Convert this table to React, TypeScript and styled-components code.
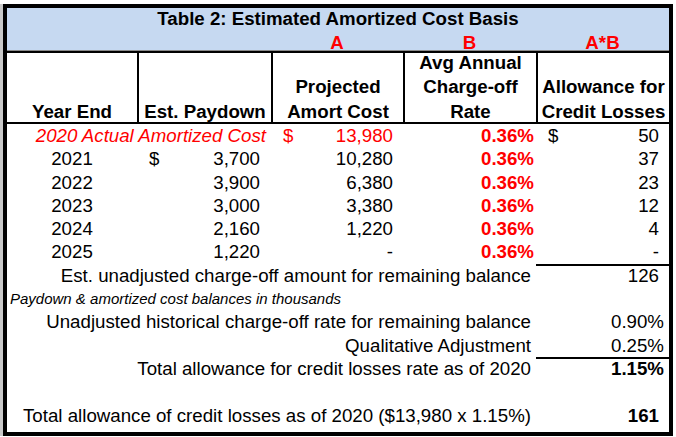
import styled, { createGlobalStyle } from 'styled-components';

const COLS = '130px 134px 132px 133px 133px';

const GlobalStyle = createGlobalStyle`
  html, body {
    margin: 0;
    padding: 0;
    background: #fff;
  }
  body {
    font-family: 'Liberation Sans', Arial, sans-serif;
    color: #000;
  }
`;

const Frame = styled.div`
  box-sizing: border-box;
  width: 670px;
  height: 432px;
  margin: 4px 0 0 3px;
  border: 4px solid #000;
  box-shadow: -3px 0 0 #c8c8c8;
  font-size: 18.7px;
  overflow: hidden;
`;

const TitleBand = styled.div`
  height: 42px;
  background: #c6d9f1;
  border-bottom: 1px solid #8a8a8a;
`;

const Title = styled.div`
  padding-top: 1px;
  line-height: 19px;
  text-align: center;
  font-weight: bold;
`;

const LetterRow = styled.div`
  display: grid;
  grid-template-columns: ${COLS};
  margin-top: 6px;
  line-height: 17px;
  color: #f00;
  font-weight: bold;
  text-align: center;
`;

const HeadRow = styled.div`
  display: grid;
  grid-template-columns: ${COLS};
  grid-template-rows: 69px;
  height: 69px;
  border-top: 2px solid #000;
  border-bottom: 2px solid #000;
  font-weight: bold;
`;

const HeadCell = styled.div`
  min-height: 0;
  display: flex;
  flex-direction: column;
  justify-content: flex-end;
  align-items: center;
  line-height: 24.5px;
  text-align: center;

  & + & {
    border-left: 2px solid #000;
  }
`;

const HeadText = styled.div`
  margin-bottom: -2px;
  white-space: nowrap;
`;

const Row = styled.div`
  display: grid;
  grid-template-columns: ${COLS};
  height: 23.3px;
  line-height: 23.3px;
`;

interface CellProps {
  $span?: number;
  $align?: 'left' | 'center' | 'right' | 'split';
  $pl?: number;
  $pr?: number;
  $red?: boolean;
  $bold?: boolean;
  $italic?: boolean;
  $small?: boolean;
  $rule?: boolean;
}

const justify = {
  left: 'flex-start',
  center: 'center',
  right: 'flex-end',
  split: 'space-between'
};

const Cell = styled.div<CellProps>`
  grid-column: span ${({ $span }) => $span ?? 1};
  display: flex;
  justify-content: ${({ $align }) => justify[$align ?? 'right']};
  padding-left: ${({ $pl }) => $pl ?? 0}px;
  padding-right: ${({ $pr }) => $pr ?? 0}px;
  color: ${({ $red }) => ($red ? '#f00' : '#000')};
  font-weight: ${({ $bold }) => ($bold ? 'bold' : 'normal')};
  font-style: ${({ $italic }) => ($italic ? 'italic' : 'normal')};
  font-size: ${({ $small }) => ($small ? '15px' : 'inherit')};
  box-shadow: ${({ $rule }) => ($rule ? 'inset 0 2px 0 #000' : 'none')};
  white-space: nowrap;
`;

const years = [
  { year: '2021', pay: '3,700', amort: '10,280', allowance: '37' },
  { year: '2022', pay: '3,900', amort: '6,380', allowance: '23' },
  { year: '2023', pay: '3,000', amort: '3,380', allowance: '12' },
  { year: '2024', pay: '2,160', amort: '1,220', allowance: '4' },
  { year: '2025', pay: '1,220', amort: '-', allowance: '-' }
];

const RATE = '0.36%';

export default function App() {
  return (
    <>
      <GlobalStyle />
      <Frame>
        <TitleBand>
          <Title>Table 2: Estimated Amortized Cost Basis</Title>
          <LetterRow>
            <div />
            <div />
            <div>A</div>
            <div>B</div>
            <div>A*B</div>
          </LetterRow>
        </TitleBand>

        <HeadRow>
          <HeadCell><HeadText>Year End</HeadText></HeadCell>
          <HeadCell><HeadText>Est. Paydown</HeadText></HeadCell>
          <HeadCell>
            <HeadText>Projected<br />Amort Cost</HeadText>
          </HeadCell>
          <HeadCell>
            <HeadText>Avg Annual<br />Charge-off<br />Rate</HeadText>
          </HeadCell>
          <HeadCell>
            <HeadText>Allowance for<br />Credit Losses</HeadText>
          </HeadCell>
        </HeadRow>

        <Row>
          <Cell $span={2} $pr={5} $red $italic>2020 Actual Amortized Cost</Cell>
          <Cell $align='split' $pl={12} $pr={10} $red>
            <span>$</span>
            <span>13,980</span>
          </Cell>
          <Cell $pr={2} $red $bold>{RATE}</Cell>
          <Cell $align='split' $pl={12} $pr={10}>
            <span>$</span>
            <span>50</span>
          </Cell>
        </Row>

        {years.map((r, i) => (
          <Row key={r.year}>
            <Cell $align='center'>{r.year}</Cell>
            <Cell $align={i === 0 ? 'split' : 'right'} $pl={12} $pr={11}>
              {i === 0 && <span>$</span>}
              <span>{r.pay}</span>
            </Cell>
            <Cell $pr={10}>{r.amort}</Cell>
            <Cell $pr={2} $red $bold>{RATE}</Cell>
            <Cell $pr={10}>{r.allowance}</Cell>
          </Row>
        ))}

        <Row>
          <Cell $span={4} $pr={5}>Est. unadjusted charge-off amount for remaining balance</Cell>
          <Cell $pr={10} $rule>126</Cell>
        </Row>

        <Row>
          <Cell $span={5} $align='left' $pl={3} $italic $small>
            Paydown &amp; amortized cost balances in thousands
          </Cell>
        </Row>

        <Row>
          <Cell $span={4} $pr={5}>Unadjusted historical charge-off rate for remaining balance</Cell>
          <Cell $pr={5}>0.90%</Cell>
        </Row>

        <Row>
          <Cell $span={4} $pr={5}>Qualitative Adjustment</Cell>
          <Cell $pr={5}>0.25%</Cell>
        </Row>

        <Row>
          <Cell $span={4} $pr={5}>Total allowance for credit losses rate as of 2020</Cell>
          <Cell $pr={5} $bold $rule>1.15%</Cell>
        </Row>

        <Row />

        <Row>
          <Cell $span={4} $pr={5}>Total allowance of credit losses as of 2020 ($13,980 x 1.15%)</Cell>
          <Cell $pr={10} $bold>161</Cell>
        </Row>
      </Frame>
    </>
  );
}
